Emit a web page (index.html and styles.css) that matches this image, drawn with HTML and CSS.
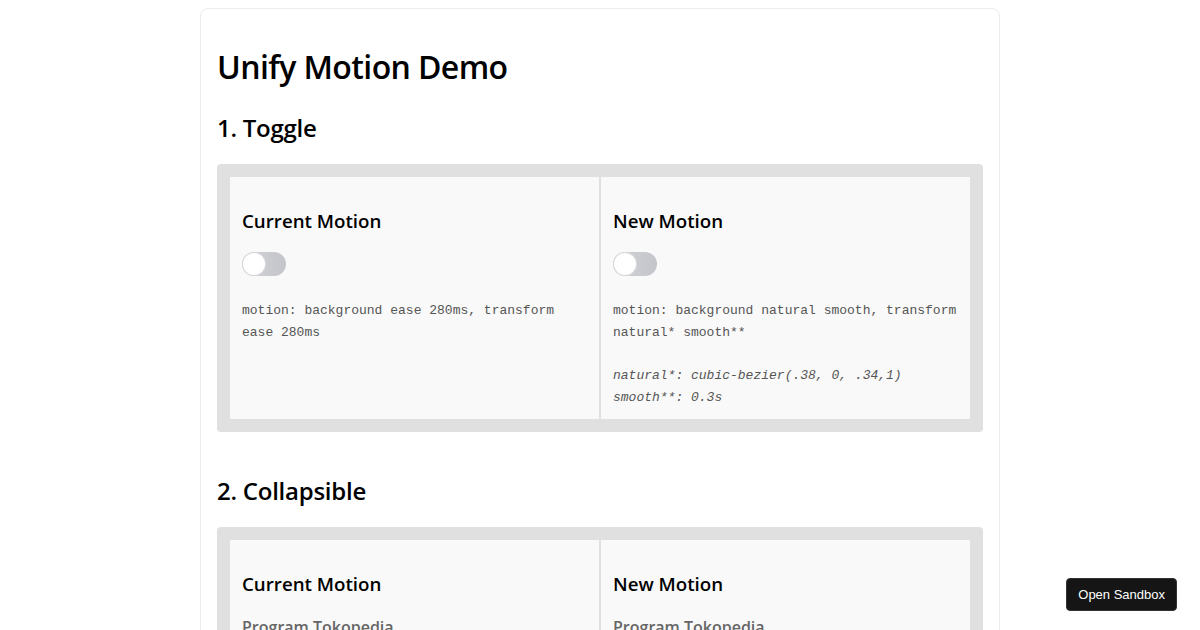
FILE: index.html
```html
<!DOCTYPE html>
<html lang="en">
<head>
    <meta charset="UTF-8">
    <meta name="viewport" content="width=device-width, initial-scale=1.0">
    <title>Unify Motion Demo</title>
    <link rel="stylesheet" href="styles.css">
</head>
<body>
    <div id="app">
        <h1>Unify Motion Demo</h1>

        <h2>1. Toggle</h2>
        <div class="demo">
            <div class="col">
                <h3>Current Motion</h3>
                <div class="toggle"><span class="knob"></span></div>
                <p class="code">motion: background ease 280ms, transform ease 280ms</p>
            </div>
            <div class="col">
                <h3>New Motion</h3>
                <div class="toggle"><span class="knob"></span></div>
                <p class="code">motion: background natural smooth, transform natural* smooth**</p>
                <p class="code note">natural*: cubic-bezier(.38, 0, .34,1)<br>smooth**: 0.3s</p>
            </div>
        </div>

        <h2 class="next">2. Collapsible</h2>
        <div class="demo">
            <div class="col">
                <h3>Current Motion</h3>
                <p class="collapse-title">Program Tokopedia</p>
            </div>
            <div class="col">
                <h3>New Motion</h3>
                <p class="collapse-title">Program Tokopedia</p>
            </div>
        </div>
    </div>

    <a class="sandbox-btn" href="#">Open Sandbox</a>
</body>
</html>
```

FILE: styles.css
```css
* {
    box-sizing: border-box;
}

body {
    margin: 8px;
    font-family: 'Open Sans', sans-serif;
    color: #000;
    background: #fff;
}

#app {
    max-width: 800px;
    margin: 0 auto;
    padding: 16px 16px 40px;
    border: 1px solid #ececec;
    border-radius: 8px;
    min-height: 700px;
}

h1 {
    font-size: 32px;
    font-weight: 600;
    line-height: 44px;
    margin: 20px 0 23px;
    letter-spacing: -0.6px;
}

h2 {
    font-size: 24px;
    font-weight: 600;
    line-height: 32px;
    margin: 0 0 20px;
    letter-spacing: -0.25px;
}

h2.next {
    margin-top: 43px;
}

.demo {
    display: grid;
    grid-template-columns: 1fr 1fr;
    gap: 2px;
    background: #e0e0e0;
    padding: 13px;
    border-radius: 4px;
}

.col {
    background: #f9f9f9;
    padding: 10px 12px;
}

h3 {
    font-size: 18.72px;
    font-weight: 600;
    line-height: 28px;
    margin: 20px 0 17px;
}

.toggle {
    width: 44px;
    height: 24px;
    border-radius: 12px;
    background: linear-gradient(90deg, #d2d4d8, #c3c5ca);
    padding: 1px;
    margin-bottom: 24px;
}

.knob {
    display: block;
    width: 22px;
    height: 22px;
    border-radius: 50%;
    background: #fff;
    box-shadow: 0 0 0 1px #d8d9dc;
}

.code {
    font-family: 'Liberation Mono', monospace;
    font-size: 13px;
    line-height: 22px;
    color: #555;
    margin: 0;
}

.note {
    font-style: italic;
    margin-top: 21px;
}

.collapse-title {
    font-size: 16px;
    font-weight: 600;
    line-height: 24px;
    color: #666;
    margin: 10px 0 0;
}

.sandbox-btn {
    position: fixed;
    right: 23px;
    bottom: 19px;
    background: #151515;
    color: #fff;
    font-family: 'Liberation Sans', Arial, sans-serif;
    font-size: 13px;
    line-height: 15px;
    padding: 8px 11px;
    border-radius: 4px;
    text-decoration: none;
    border: 1px solid #333;
}
```
